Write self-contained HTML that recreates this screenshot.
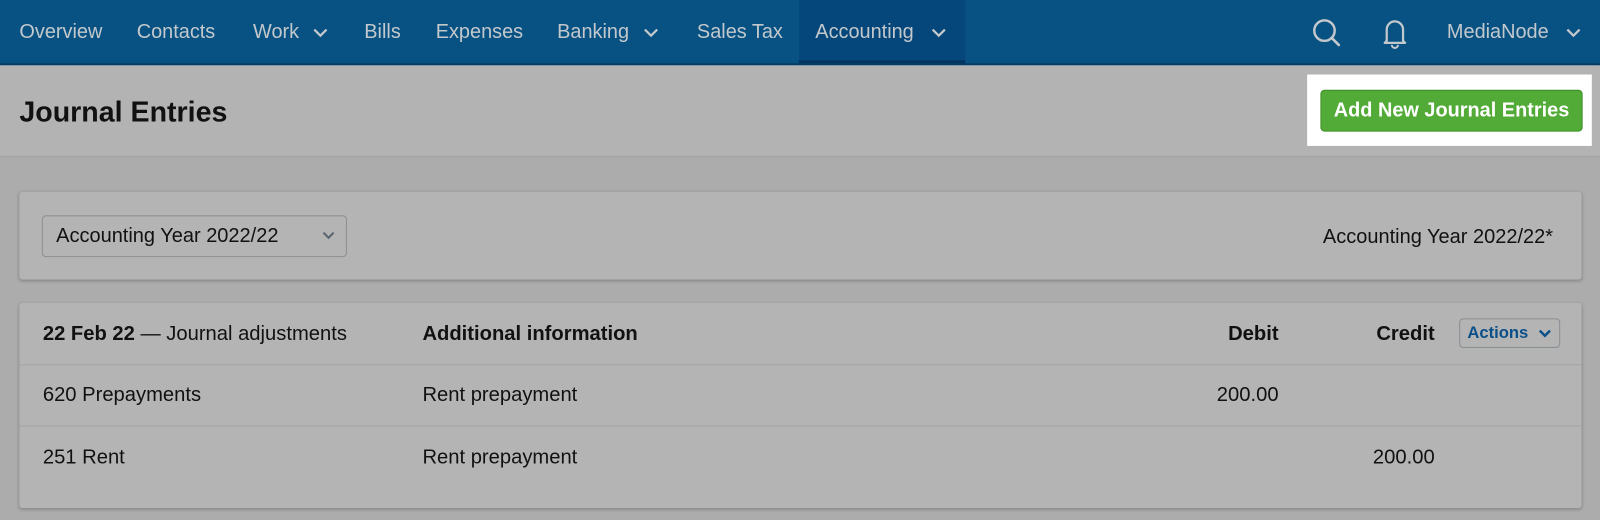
<!DOCTYPE html>
<html><head><meta charset="utf-8"><style>
*{margin:0;padding:0;box-sizing:border-box}
body{width:1600px;height:520px;overflow:hidden;background:#acacac;font-family:"Liberation Sans",Arial,sans-serif;color:#111;position:relative}
#w{position:absolute;left:0;top:0;width:1568px;height:510px;transform:scale(1.0204);transform-origin:0 0}
.nav{position:absolute;left:0;top:0;width:1568px;height:64px;background:#075283;border-bottom:2px solid #053c63}
.nav span{position:absolute;top:20px;font-size:19.5px;color:#c3c8cc;white-space:nowrap}
.act{position:absolute;left:783px;top:0;width:163px;height:62px;background:#05477a;border-bottom:3px solid #043560}
.chev{position:absolute}
.hdr{position:absolute;left:0;top:64px;width:1568px;height:90px;background:#b3b3b3;border-bottom:1px solid #a2a2a2}
.title{position:absolute;left:19px;top:94px;font-size:28px;font-weight:bold;color:#111}
.hl{position:absolute;left:1281px;top:73px;width:279px;height:70px;background:#fff}
.btn{position:absolute;left:1294px;top:88px;width:257px;height:41px;background:#52ab36;border:1px solid #3f8f28;border-radius:4px;color:#fff;font-weight:bold;font-size:19.5px;text-align:center;line-height:39px}
.card{position:absolute;left:19px;width:1531px;background:#b4b4b4;border-radius:3px;box-shadow:0 1px 3px rgba(0,0,0,.25)}
.sel{position:absolute;left:22px;top:23px;width:299px;height:41px;border:1px solid #8e8e8e;border-radius:4px;font-size:19.6px;line-height:39px;padding-left:13px;color:#111}
.t{position:absolute;font-size:19.8px;white-space:nowrap}
.b{font-weight:bold}
.line{position:absolute;left:0;width:1531px;height:1px;background:#a3a3a3}
.actions{position:absolute;left:1411px;top:15px;width:99px;height:29px;border:1px solid #8a8f94;border-radius:4px;color:#0a4f8a;font-weight:bold;font-size:16.3px;line-height:27px;padding-left:7px}
</style></head><body><div id="w">
<div class="nav">
<div class="act"></div>
<span style="left:19px">Overview</span>
<span style="left:134px">Contacts</span>
<span style="left:248px">Work</span>
<svg class="chev" style="left:306px;top:27px" width="16" height="10"><path d="M2 2l6 6 6-6" stroke="#c3c8cc" stroke-width="2.2" fill="none"/></svg>
<span style="left:357px">Bills</span>
<span style="left:427px">Expenses</span>
<span style="left:546px">Banking</span>
<svg class="chev" style="left:630px;top:27px" width="16" height="10"><path d="M2 2l6 6 6-6" stroke="#c3c8cc" stroke-width="2.2" fill="none"/></svg>
<span style="left:683px">Sales Tax</span>
<span style="left:799px">Accounting</span>
<svg class="chev" style="left:912px;top:27px" width="16" height="10"><path d="M2 2l6 6 6-6" stroke="#c3c8cc" stroke-width="2.2" fill="none"/></svg>
<svg class="chev" style="left:1284px;top:16px" width="34" height="34"><circle cx="14" cy="14" r="10" stroke="#c3c8cc" stroke-width="2.4" fill="none"/><path d="M21 21l7 7" stroke="#c3c8cc" stroke-width="2.6" stroke-linecap="round"/></svg>
<svg class="chev" style="left:1350px;top:14px" width="34" height="34"><path d="M9 26V15a8 8 0 0 1 16 0v11l2 2H7z" stroke="#c3c8cc" stroke-width="2.2" fill="none" stroke-linejoin="round"/><path d="M14 30a3 3 0 0 0 6 0" stroke="#c3c8cc" stroke-width="2" fill="none"/></svg>
<span style="left:1418px">MediaNode</span>
<svg class="chev" style="left:1534px;top:27px" width="16" height="10"><path d="M2 2l6 6 6-6" stroke="#c3c8cc" stroke-width="2.2" fill="none"/></svg>
</div>
<div class="hdr"></div>
<div class="title">Journal Entries</div>
<div class="hl"></div>
<div class="btn">Add New Journal Entries</div>
<div class="card" style="top:188px;height:86px">
<div class="sel">Accounting Year 2022/22</div>
<svg class="chev" style="left:296px;top:38px" width="14" height="10"><path d="M2 2l5 5 5-5" stroke="#5c6670" stroke-width="2" fill="none"/></svg>
<div class="t" style="right:28px;top:33px;font-size:19.6px">Accounting Year 2022/22*</div>
</div>
<div class="card" style="top:297px;height:201px">
<div class="t" style="left:23px;top:19px"><b>22 Feb 22</b> — Journal adjustments</div>
<div class="t b" style="left:395px;top:19px">Additional information</div>
<div class="t b" style="right:297px;top:19px">Debit</div>
<div class="t b" style="right:144px;top:19px">Credit</div>
<div class="actions">Actions</div>
<svg class="chev" style="left:1488px;top:25px" width="14" height="10"><path d="M2 2l5 5 5-5" stroke="#0a4f8a" stroke-width="2.4" fill="none"/></svg>
<div class="line" style="top:60px"></div>
<div class="t" style="left:23px;top:79px">620 Prepayments</div>
<div class="t" style="left:395px;top:79px">Rent prepayment</div>
<div class="t" style="right:297px;top:79px">200.00</div>
<div class="line" style="top:120px"></div>
<div class="t" style="left:23px;top:140px">251 Rent</div>
<div class="t" style="left:395px;top:140px">Rent prepayment</div>
<div class="t" style="right:144px;top:140px">200.00</div>
</div>
</div></body></html>
